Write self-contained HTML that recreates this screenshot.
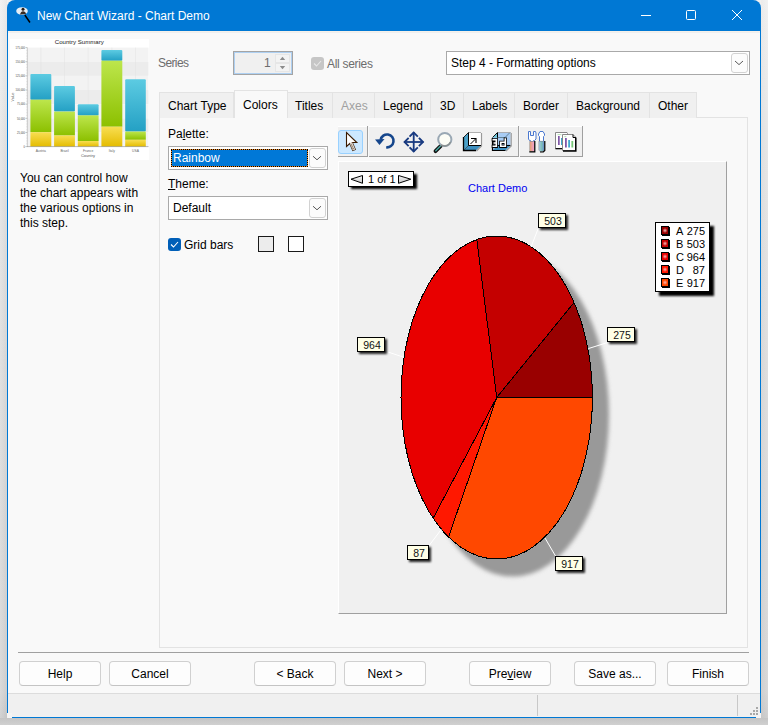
<!DOCTYPE html>
<html><head><meta charset="utf-8">
<style>
*{box-sizing:border-box;margin:0;padding:0}
html,body{width:768px;height:725px;overflow:hidden;background:linear-gradient(to bottom,#f0f0f0 0px,#e4e4e4 150px,#dcdcdc 360px,#d4d4d4 690px,#c8c8c8 725px)}
body{position:relative;font-family:"Liberation Sans",sans-serif;font-size:12px;color:#000}
.a{position:absolute}
#shadowL{left:0;top:0;width:7px;height:725px;background:linear-gradient(to right,rgba(255,255,255,.15),rgba(0,0,0,.03))}
#shadowR{left:761px;top:0;width:7px;height:725px;background:linear-gradient(to right,rgba(0,0,0,.02),rgba(255,255,255,.1))}
#shadowB{left:0;top:718px;width:768px;height:7px;background:linear-gradient(to bottom,#c4c4c4,#d0d0d0)}
#win{left:7px;top:0;width:754px;height:718px;background:#0078d4;border-radius:8px 8px 0 0}
#client{left:8px;top:31px;width:752px;height:686px;background:#f9f9f9}
.title{left:37px;top:9px;color:#fff;font-size:12px;line-height:14px;white-space:nowrap}
.t{position:absolute;white-space:nowrap;line-height:14px}
.btn{position:absolute;height:25px;border:1px solid #d0d0d0;border-bottom-color:#c4c4c4;border-radius:4px;background:#fdfdfd;text-align:center;line-height:24px;font-size:12px}
.tab{position:absolute;top:92px;height:26px;background:#f0f0f0;border:1px solid #e3e3e3;border-bottom:none}
.tab span{position:absolute;top:6px;white-space:nowrap;line-height:14px}
.combo{position:absolute;background:#fff;border:1px solid #a9a9a9}
.ddb{position:absolute;border:1px solid #d2d2d2;border-radius:3px;background:#fcfcfc}
</style></head><body>
<div class="a" id="shadowL"></div>
<div class="a" id="shadowR"></div>
<div class="a" id="shadowB"></div>
<div class="a" id="win"></div>
<div class="a" id="client"></div>
<div class="a title">New Chart Wizard - Chart Demo</div>

<!-- title bar buttons -->
<svg class="a" style="left:630px;top:0;width:130px;height:31px" width="130" height="31">
<line x1="11" y1="15.5" x2="21" y2="15.5" stroke="#fff" stroke-width="1"/>
<rect x="56.5" y="10.5" width="9" height="9" fill="none" stroke="#fff" stroke-width="1" rx="1"/>
<line x1="102" y1="10" x2="112" y2="20" stroke="#fff" stroke-width="1"/>
<line x1="112" y1="10" x2="102" y2="20" stroke="#fff" stroke-width="1"/>
</svg>
<!-- app icon -->
<svg class="a" style="left:10px;top:2px;width:26px;height:26px" width="26" height="26" viewBox="10 2 26 26">
<ellipse cx="22" cy="11" rx="5.8" ry="3.8" fill="#e6eef5"/>
<circle cx="23" cy="9.2" r="1.5" fill="#2a1a10"/>
<path d="M20 14.5 Q21 11.2 23 11.2 Q25.5 11.2 26 14 Z" fill="#3a2a20"/>
<line x1="24.8" y1="15" x2="30" y2="22.5" stroke="#000" stroke-width="1.4"/>
</svg>
<!-- thumbnail -->
<svg class="a" style="left:8px;top:31px;width:145px;height:132px" width="145" height="132" viewBox="8 31 145 132">
<defs>
<linearGradient id="gc" x1="0" y1="0" x2="0" y2="1"><stop offset="0" stop-color="#5ccbe2"/><stop offset="1" stop-color="#24a0c4"/></linearGradient>
<linearGradient id="gg" x1="0" y1="0" x2="0" y2="1"><stop offset="0" stop-color="#bde64c"/><stop offset="1" stop-color="#8cc000"/></linearGradient>
<linearGradient id="gy" x1="0" y1="0" x2="0" y2="1"><stop offset="0" stop-color="#f8de52"/><stop offset="1" stop-color="#e4bc00"/></linearGradient>
</defs>
<rect x="8" y="31" width="145" height="132" fill="#f9f9f9"/>
<rect x="10" y="39" width="139" height="121" fill="#fff"/>
<rect x="27.5" y="47.60" width="121" height="14.14" fill="#f3f3f3"/>
<rect x="27.5" y="61.74" width="121" height="14.14" fill="#ececec"/>
<rect x="27.5" y="75.89" width="121" height="14.14" fill="#f3f3f3"/>
<rect x="27.5" y="90.03" width="121" height="14.14" fill="#ececec"/>
<rect x="27.5" y="104.17" width="121" height="14.14" fill="#f3f3f3"/>
<rect x="27.5" y="118.31" width="121" height="14.14" fill="#ececec"/>
<rect x="27.5" y="132.46" width="121" height="14.14" fill="#f3f3f3"/>
<line x1="40.8" y1="47.6" x2="40.8" y2="146.6" stroke="#e2e2e2" stroke-width="0.5"/>
<line x1="64.5" y1="47.6" x2="64.5" y2="146.6" stroke="#e2e2e2" stroke-width="0.5"/>
<line x1="88.2" y1="47.6" x2="88.2" y2="146.6" stroke="#e2e2e2" stroke-width="0.5"/>
<line x1="111.8" y1="47.6" x2="111.8" y2="146.6" stroke="#e2e2e2" stroke-width="0.5"/>
<line x1="135.5" y1="47.6" x2="135.5" y2="146.6" stroke="#e2e2e2" stroke-width="0.5"/>
<rect x="30.4" y="74" width="20.9" height="25.7" rx="1" fill="url(#gc)"/>
<rect x="30.4" y="99.7" width="20.9" height="32.5" fill="url(#gg)"/>
<rect x="30.4" y="132.2" width="20.9" height="14.4" fill="url(#gy)"/>
<rect x="54.1" y="86" width="20.8" height="25.6" rx="1" fill="url(#gc)"/>
<rect x="54.1" y="111.6" width="20.8" height="23.9" fill="url(#gg)"/>
<rect x="54.1" y="135.5" width="20.8" height="11.1" fill="url(#gy)"/>
<rect x="77.8" y="104.2" width="20.8" height="11.2" rx="1" fill="url(#gc)"/>
<rect x="77.8" y="115.4" width="20.8" height="25.6" fill="url(#gg)"/>
<rect x="77.8" y="141" width="20.8" height="5.6" fill="url(#gy)"/>
<rect x="101.4" y="50.1" width="20.9" height="10.6" rx="1" fill="url(#gc)"/>
<rect x="101.4" y="60.7" width="20.9" height="66.0" fill="url(#gg)"/>
<rect x="101.4" y="126.7" width="20.9" height="19.9" fill="url(#gy)"/>
<rect x="125.2" y="79.2" width="20.6" height="52.4" rx="1" fill="url(#gc)"/>
<rect x="125.2" y="131.6" width="20.6" height="8.2" fill="url(#gg)"/>
<rect x="125.2" y="139.8" width="20.6" height="6.8" fill="url(#gy)"/>
<line x1="27.3" y1="47.6" x2="27.3" y2="146.6" stroke="#999" stroke-width="0.5"/>
<line x1="27" y1="146.6" x2="148.5" y2="146.6" stroke="#888" stroke-width="0.6"/>
<line x1="25.5" y1="47.60" x2="27.3" y2="47.60" stroke="#888" stroke-width="0.5"/>
<line x1="26.3" y1="50.43" x2="27.3" y2="50.43" stroke="#bbb" stroke-width="0.35"/>
<line x1="26.3" y1="53.26" x2="27.3" y2="53.26" stroke="#bbb" stroke-width="0.35"/>
<line x1="26.3" y1="56.09" x2="27.3" y2="56.09" stroke="#bbb" stroke-width="0.35"/>
<line x1="26.3" y1="58.91" x2="27.3" y2="58.91" stroke="#bbb" stroke-width="0.35"/>
<line x1="25.5" y1="61.74" x2="27.3" y2="61.74" stroke="#888" stroke-width="0.5"/>
<line x1="26.3" y1="64.57" x2="27.3" y2="64.57" stroke="#bbb" stroke-width="0.35"/>
<line x1="26.3" y1="67.40" x2="27.3" y2="67.40" stroke="#bbb" stroke-width="0.35"/>
<line x1="26.3" y1="70.23" x2="27.3" y2="70.23" stroke="#bbb" stroke-width="0.35"/>
<line x1="26.3" y1="73.06" x2="27.3" y2="73.06" stroke="#bbb" stroke-width="0.35"/>
<line x1="25.5" y1="75.89" x2="27.3" y2="75.89" stroke="#888" stroke-width="0.5"/>
<line x1="26.3" y1="78.71" x2="27.3" y2="78.71" stroke="#bbb" stroke-width="0.35"/>
<line x1="26.3" y1="81.54" x2="27.3" y2="81.54" stroke="#bbb" stroke-width="0.35"/>
<line x1="26.3" y1="84.37" x2="27.3" y2="84.37" stroke="#bbb" stroke-width="0.35"/>
<line x1="26.3" y1="87.20" x2="27.3" y2="87.20" stroke="#bbb" stroke-width="0.35"/>
<line x1="25.5" y1="90.03" x2="27.3" y2="90.03" stroke="#888" stroke-width="0.5"/>
<line x1="26.3" y1="92.86" x2="27.3" y2="92.86" stroke="#bbb" stroke-width="0.35"/>
<line x1="26.3" y1="95.69" x2="27.3" y2="95.69" stroke="#bbb" stroke-width="0.35"/>
<line x1="26.3" y1="98.51" x2="27.3" y2="98.51" stroke="#bbb" stroke-width="0.35"/>
<line x1="26.3" y1="101.34" x2="27.3" y2="101.34" stroke="#bbb" stroke-width="0.35"/>
<line x1="25.5" y1="104.17" x2="27.3" y2="104.17" stroke="#888" stroke-width="0.5"/>
<line x1="26.3" y1="107.00" x2="27.3" y2="107.00" stroke="#bbb" stroke-width="0.35"/>
<line x1="26.3" y1="109.83" x2="27.3" y2="109.83" stroke="#bbb" stroke-width="0.35"/>
<line x1="26.3" y1="112.66" x2="27.3" y2="112.66" stroke="#bbb" stroke-width="0.35"/>
<line x1="26.3" y1="115.49" x2="27.3" y2="115.49" stroke="#bbb" stroke-width="0.35"/>
<line x1="25.5" y1="118.31" x2="27.3" y2="118.31" stroke="#888" stroke-width="0.5"/>
<line x1="26.3" y1="121.14" x2="27.3" y2="121.14" stroke="#bbb" stroke-width="0.35"/>
<line x1="26.3" y1="123.97" x2="27.3" y2="123.97" stroke="#bbb" stroke-width="0.35"/>
<line x1="26.3" y1="126.80" x2="27.3" y2="126.80" stroke="#bbb" stroke-width="0.35"/>
<line x1="26.3" y1="129.63" x2="27.3" y2="129.63" stroke="#bbb" stroke-width="0.35"/>
<line x1="25.5" y1="132.46" x2="27.3" y2="132.46" stroke="#888" stroke-width="0.5"/>
<line x1="26.3" y1="135.29" x2="27.3" y2="135.29" stroke="#bbb" stroke-width="0.35"/>
<line x1="26.3" y1="138.11" x2="27.3" y2="138.11" stroke="#bbb" stroke-width="0.35"/>
<line x1="26.3" y1="140.94" x2="27.3" y2="140.94" stroke="#bbb" stroke-width="0.35"/>
<line x1="26.3" y1="143.77" x2="27.3" y2="143.77" stroke="#bbb" stroke-width="0.35"/>
<line x1="25.5" y1="146.60" x2="27.3" y2="146.60" stroke="#888" stroke-width="0.5"/>
<text x="25" y="48.90" font-size="2.6" text-anchor="end" fill="#444" font-family="Liberation Sans">175,000</text>
<text x="25" y="63.04" font-size="2.6" text-anchor="end" fill="#444" font-family="Liberation Sans">150,000</text>
<text x="25" y="77.19" font-size="2.6" text-anchor="end" fill="#444" font-family="Liberation Sans">125,000</text>
<text x="25" y="91.33" font-size="2.6" text-anchor="end" fill="#444" font-family="Liberation Sans">100,000</text>
<text x="25" y="105.47" font-size="2.6" text-anchor="end" fill="#444" font-family="Liberation Sans">75,000</text>
<text x="25" y="119.61" font-size="2.6" text-anchor="end" fill="#444" font-family="Liberation Sans">50,000</text>
<text x="25" y="133.76" font-size="2.6" text-anchor="end" fill="#444" font-family="Liberation Sans">25,000</text>
<text x="25" y="147.90" font-size="2.6" text-anchor="end" fill="#444" font-family="Liberation Sans">0</text>
<text x="40.8" y="152.3" font-size="3.3" text-anchor="middle" fill="#666" font-family="Liberation Sans">Austria</text>
<text x="64.5" y="152.3" font-size="3.3" text-anchor="middle" fill="#666" font-family="Liberation Sans">Brazil</text>
<text x="88.2" y="152.3" font-size="3.3" text-anchor="middle" fill="#666" font-family="Liberation Sans">France</text>
<text x="111.8" y="152.3" font-size="3.3" text-anchor="middle" fill="#666" font-family="Liberation Sans">Italy</text>
<text x="135.5" y="152.3" font-size="3.3" text-anchor="middle" fill="#666" font-family="Liberation Sans">USA</text>
<text x="88" y="156.8" font-size="4" text-anchor="middle" fill="#555" font-family="Liberation Sans">Country</text>
<text x="14" y="97" font-size="3.6" text-anchor="middle" fill="#555" font-family="Liberation Sans" transform="rotate(-90 14 97)">Value</text>
<text x="79.3" y="43.9" font-size="6.1" text-anchor="middle" fill="#222" font-family="Liberation Sans">Country Summary</text>
</svg>
<div class="a" style="left:8px;top:31px;width:752px;height:1px;background:#f6f1ea"></div>
<div class="a" style="left:8px;top:32px;width:752px;height:1px;background:#efefef"></div>
<!-- left description -->
<div class="t" style="left:20px;top:171px;line-height:15px;color:#000">You can control how<br>the chart appears with<br>the various options in<br>this step.</div>

<!-- series row -->
<div class="t" style="left:158px;top:56px;color:#6d6d6d;letter-spacing:-0.6px">Series</div>
<div class="a" style="left:233px;top:51px;width:60px;height:24px;background:#f0f0f0;border:1px solid #a4a4a4;box-shadow:inset 0 0 0 1px #aed0f2"></div>
<div class="t" style="left:264px;top:56px;color:#6d6d6d">1</div>
<svg class="a" style="left:274px;top:53px;width:17px;height:20px" width="17" height="20" viewBox="274 53 17 20">
<rect x="275.5" y="54.5" width="14" height="8" fill="#f3f3f3" stroke="#e6e6e6"/>
<rect x="275.5" y="63.5" width="14" height="8" fill="#f3f3f3" stroke="#e6e6e6"/>
<path d="M279.8 60 L282.5 56.8 L285.2 60 Z" fill="#8c8c8c"/>
<path d="M279.8 66 L282.5 69.2 L285.2 66 Z" fill="#8c8c8c"/>
</svg>
<div class="a" style="left:311px;top:57px;width:13px;height:13px;border-radius:3px;background:#c6c6c6"></div>
<svg class="a" style="left:311px;top:57px;width:13px;height:13px" width="13" height="13"><path d="M3 6.5 L5.5 9 L10 4" fill="none" stroke="#e8e8e8" stroke-width="1.1"/></svg>
<div class="t" style="left:327px;top:57px;color:#6d6d6d;letter-spacing:-0.3px">All series</div>
<div class="combo" style="left:446px;top:51px;width:304px;height:24px"></div>
<div class="t" style="left:451px;top:56px">Step 4 - Formatting options</div>
<div class="ddb" style="left:731px;top:53px;width:17px;height:20px"></div>
<svg class="a" style="left:731px;top:53px;width:17px;height:20px" width="17" height="20"><path d="M4 8 L8 11.6 L12 8" fill="none" stroke="#505050" stroke-width="0.95"/></svg>

<!-- tab panel -->
<div class="a" style="left:159px;top:117px;width:589px;height:531px;border:1px solid #e3e3e3;background:#f9f9f9"></div>
<div class="tab" style="left:159px;width:75px"><span style="left:8px;color:#000">Chart Type</span></div>
<div class="tab" style="left:287px;width:46px"><span style="left:7px;color:#000">Titles</span></div>
<div class="tab" style="left:332px;width:43px"><span style="left:8px;color:#a0a0a0">Axes</span></div>
<div class="tab" style="left:374px;width:57px"><span style="left:8px;color:#000">Legend</span></div>
<div class="tab" style="left:430px;width:34px"><span style="left:9px;color:#000">3D</span></div>
<div class="tab" style="left:463px;width:52px"><span style="left:8px;color:#000">Labels</span></div>
<div class="tab" style="left:514px;width:54px"><span style="left:8px;color:#000">Border</span></div>
<div class="tab" style="left:567px;width:83px"><span style="left:8px;color:#000">Background</span></div>
<div class="tab" style="left:649px;width:48px"><span style="left:8px;color:#000">Other</span></div>
<div class="tab" style="left:234px;top:90px;width:54px;height:28px;background:#f9f9f9;border-color:#e3e3e3"><span style="left:8px;top:7px">Colors</span></div>

<!-- palette / theme -->
<div class="t" style="left:168px;top:127px">Pa<u>l</u>ette:</div>
<div class="combo" style="left:168px;top:146px;width:160px;height:24px"></div>
<div class="a" style="left:171px;top:149px;width:137px;height:18px;background:#f08a24;border:1px dotted #000"></div><div class="a" style="left:172px;top:150px;width:135px;height:16px;background:#0078d7"></div>
<div class="t" style="left:173px;top:151px;color:#fff">Rainbow</div>
<div class="ddb" style="left:309px;top:148px;width:17px;height:20px"></div>
<svg class="a" style="left:309px;top:148px;width:17px;height:20px" width="17" height="20"><path d="M4 8.2 L8 11.8 L12 8.2" fill="none" stroke="#505050" stroke-width="0.95"/></svg>
<div class="t" style="left:168px;top:177px"><u>T</u>heme:</div>
<div class="combo" style="left:168px;top:196px;width:160px;height:24px"></div>
<div class="t" style="left:173px;top:201px">Default</div>
<div class="ddb" style="left:309px;top:198px;width:17px;height:20px"></div>
<svg class="a" style="left:309px;top:198px;width:17px;height:20px" width="17" height="20"><path d="M4 8.2 L8 11.8 L12 8.2" fill="none" stroke="#505050" stroke-width="0.95"/></svg>
<div class="a" style="left:168px;top:238px;width:13px;height:13px;border-radius:3px;background:#005fb8"></div>
<svg class="a" style="left:168px;top:238px;width:13px;height:13px" width="13" height="13"><path d="M3 6.5 L5.5 9 L10 4" fill="none" stroke="#fff" stroke-width="1.1"/></svg>
<div class="t" style="left:184px;top:238px">Grid bars</div>
<div class="a" style="left:258px;top:236px;width:16px;height:16px;border:1px solid #1a1a1a;background:#ececec"></div>
<div class="a" style="left:288px;top:236px;width:16px;height:16px;border:1px solid #1a1a1a;background:#fff"></div>

<!-- toolbar -->
<svg class="a" style="left:330px;top:120px;width:260px;height:40px" width="260" height="40" viewBox="330 120 260 40">
<!-- segments -->
<rect x="338" y="126" width="30" height="31" fill="#f0f0f0"/>
<line x1="338" y1="126.5" x2="367" y2="126.5" stroke="#fff"/>
<line x1="367.5" y1="126" x2="367.5" y2="157" stroke="#a0a0a0"/>
<line x1="338" y1="156.5" x2="368" y2="156.5" stroke="#a0a0a0"/>
<rect x="369" y="126" width="150" height="31" fill="#f0f0f0"/>
<line x1="369" y1="126.5" x2="518" y2="126.5" stroke="#fff"/>
<line x1="518.5" y1="126" x2="518.5" y2="157" stroke="#a0a0a0"/>
<line x1="369" y1="156.5" x2="519" y2="156.5" stroke="#a0a0a0"/>
<rect x="520" y="126" width="63" height="31" fill="#f0f0f0"/>
<line x1="520" y1="126.5" x2="582" y2="126.5" stroke="#fff"/>
<line x1="582.5" y1="126" x2="582.5" y2="157" stroke="#a0a0a0"/>
<line x1="520" y1="156.5" x2="583" y2="156.5" stroke="#a0a0a0"/>
<!-- selected button -->
<rect x="338.5" y="130.5" width="24" height="23" rx="2.5" fill="#cce8ff" stroke="#99d1ff"/>
<!-- arrow cursor -->
<path d="M346.5 132.5 L346.5 146.5 L349.8 143.5 L352.8 150.5 L355.3 149.5 L352.3 142.5 L356.8 142.5 Z" fill="#fff" stroke="#3a1a00" stroke-width="1.1" stroke-linejoin="miter"/>
<path d="M349.8 143.5 L352.8 150.5 L355.3 149.5 L352.3 142.5 Z" fill="#d8d0c8"/>
<path d="M351.3 144.5 L353.6 149.6" stroke="#3a1a00" stroke-width="0.8" stroke-dasharray="1 1"/>
<!-- rotate -->
<path d="M380.7 139.8 A6.45 6.45 0 1 1 386.2 147.3" fill="none" stroke="#15468c" stroke-width="2.6"/>
<path d="M375 139.5 L384.5 139 L379.5 145 Z" fill="#15468c"/>
<!-- move -->
<g stroke="#183a80" stroke-width="1.8" fill="none" stroke-linecap="square">
<line x1="405" y1="142" x2="422.5" y2="142"/><line x1="413.7" y1="133" x2="413.7" y2="151"/>
<path d="M408 138.5 L404.5 142 L408 145.5"/><path d="M419.5 138.5 L423 142 L419.5 145.5"/>
<path d="M410.2 136 L413.7 132.5 L417.2 136"/><path d="M410.2 148 L413.7 151.5 L417.2 148"/>
</g>
<!-- zoom -->
<line x1="435.5" y1="151.2" x2="440.8" y2="145.8" stroke="#111" stroke-width="3.8" stroke-linecap="round"/>
<line x1="435.8" y1="150.8" x2="440.5" y2="146.1" stroke="#48a8a0" stroke-width="1.4" stroke-linecap="round"/>
<circle cx="444.8" cy="139.5" r="6.6" fill="#fdfdf6" stroke="#9aa8b4" stroke-width="2"/>
<path d="M450.5 142 A6.6 6.6 0 0 1 441 145" fill="none" stroke="#8a9090" stroke-width="1.6"/>
<!-- box arrow -->
<path d="M463.5 137.5 L468.5 132.5 L468.5 145.5 L463.5 150.5 Z" fill="#4aa0c8"/>
<path d="M463.5 150.5 L468.5 145.5 L481 145.5 L476 150.5 Z" fill="#3e90c0"/>
<rect x="468.5" y="132.5" width="12.5" height="13" fill="#fff"/>
<path d="M468.5 132.5 L481 132.5" stroke="#b0b0b0" stroke-width="1"/>
<path d="M481.5 133 L481.5 146 L476.5 151" fill="none" stroke="#999" stroke-width="1.2"/>
<path d="M463.5 137.5 L468.5 132.5" stroke="#222" stroke-width="1"/>
<path d="M463.5 137 L463.5 150.5 L476 150.5" fill="none" stroke="#000" stroke-width="1.3"/>
<path d="M468.5 132.5 L468.5 145.5 L481 145.5" fill="none" stroke="#000" stroke-width="1"/>
<path d="M468.5 145.5 L463.5 150.5" stroke="#000" stroke-width="0.8" stroke-dasharray="1 0.5"/>
<path d="M470.5 144 L475.5 139" stroke="#000" stroke-width="1"/>
<path d="M471 138.5 L476 138.5 L476 143" fill="none" stroke="#000" stroke-width="1.1"/>
<!-- 3d box -->
<path d="M492.5 137.5 L497.5 132.5 L510.5 132.5 L510.5 145.5 L505.5 150.5 L492.5 150.5 Z" fill="#a8ccf4"/>
<path d="M492.5 137.5 L497.5 132.5 L497.5 137.5 Z" fill="#70c8d8"/>
<path d="M492.5 150.5 L497.5 145.5 L510.5 145.5 L505.5 150.5 Z" fill="#3e90c0"/>
<path d="M492.5 138 L492.5 150.5 L505.5 150.5" fill="none" stroke="#000" stroke-width="1.2"/>
<path d="M492.5 137.5 L497.5 132.5" stroke="#111" stroke-width="1"/>
<path d="M497.5 132.5 L497.5 138.5" stroke="#000" stroke-width="1"/>
<path d="M497.5 137.5 L505 137.5 L510 132.5" fill="none" stroke="#507080" stroke-width="0.8"/>
<path d="M497 145.5 L510.5 145.5" stroke="#000" stroke-width="1.1"/>
<path d="M498 132.5 L510.5 132.5" stroke="#a0a0a0" stroke-width="0.8"/>
<path d="M511.2 133 L511.2 146 L506 151.2" fill="none" stroke="#999" stroke-width="1.2"/>
<g fill="none" stroke-linecap="square" stroke-linejoin="miter">
<path d="M493.3 139.8 L496.3 139.8 L496.3 146.3 L493.3 146.3 M494.3 143 L496.3 143" stroke="#000" stroke-width="3.2"/>
<path d="M500.8 142.3 L505.3 142.3 M505.3 139 L505.3 146.3 L500.8 146.3 L500.8 142.3" stroke="#000" stroke-width="3.2"/>
<path d="M493.3 139.8 L496.3 139.8 L496.3 146.3 L493.3 146.3 M494.3 143 L496.3 143" stroke="#fff" stroke-width="1.6"/>
<path d="M500.8 142.3 L505.3 142.3 M505.3 139 L505.3 146.3 L500.8 146.3 L500.8 142.3" stroke="#fff" stroke-width="1.6"/>
</g>
<!-- tools -->
<defs>
<linearGradient id="wh" x1="0" y1="0" x2="1" y2="0"><stop offset="0" stop-color="#e8a070"/><stop offset="1" stop-color="#f0a0d8"/></linearGradient>
<linearGradient id="sh" x1="0" y1="0" x2="1" y2="0"><stop offset="0" stop-color="#a8c8f0"/><stop offset=".5" stop-color="#80c0b8"/><stop offset="1" stop-color="#6890d8"/></linearGradient>
</defs>
<path d="M528.5 131.5 L530.5 131.5 L530.5 135.5 L533.5 135.5 L533.5 131.5 L535.5 131.5 L536 133 L536 139 L534.5 140.5 L533.5 140.5 L533.5 141.5 L530.5 141.5 L530.5 140.5 L529.5 140.5 L528.5 139 Z" fill="#fff" stroke="#4a78d0" stroke-width="1"/>
<rect x="529.8" y="141.3" width="4.6" height="10" fill="url(#wh)" stroke="#888" stroke-width="0.5"/>
<path d="M534.8 141 L534.8 151.8 L529.3 151.8" fill="none" stroke="#000" stroke-width="1.2"/>
<path d="M538.5 135.5 L538.5 134 L540 131.5 L543 131.5 L544.5 134 L544.5 135.5 L543.5 136.5 L543.5 141.5 L539.5 141.5 L539.5 136.5 Z" fill="#fff" stroke="#4a78d0" stroke-width="1"/>
<path d="M538.8 141.3 L544.3 141.3 L544.3 150 L543 151.5 L540 151.5 L538.8 150 Z" fill="url(#sh)" stroke="#888" stroke-width="0.5"/>
<path d="M544.8 141 L544.8 150.5 L543.3 152 L540 152" fill="none" stroke="#000" stroke-width="1.2"/>
<!-- pages -->
<path d="M555.5 132.5 L567 132.5 L567.5 133.5 L567.5 148.5 L555.5 148.5 Z" fill="#fff" stroke="#7a7a7a" stroke-width="0.9"/>
<path d="M555.5 148.7 L562.5 148.7" stroke="#000" stroke-width="1.2"/>
<rect x="557.5" y="134.3" width="4" height="0.8" fill="#a0d8a0"/>
<rect x="558" y="136" width="1.7" height="9" fill="#8058a8"/>
<rect x="561" y="138" width="1.7" height="7" fill="#40a8d0"/>
<path d="M562.5 134.5 L573 134.5 L575.5 137 L575.5 150.5 L562.5 150.5 Z" fill="#fff" stroke="#7a7a7a" stroke-width="0.9"/>
<path d="M573 134.5 L573 137.5 L575.8 137.5" fill="none" stroke="#000" stroke-width="1"/>
<path d="M575.8 137.5 L575.8 151 L563 151" fill="none" stroke="#000" stroke-width="1.5"/>
<rect x="564.3" y="136.3" width="2" height="0.8" fill="#a0d8a0"/>
<rect x="565" y="138" width="1.8" height="9.5" fill="#8058a8"/>
<rect x="568.2" y="140" width="1.8" height="7.5" fill="#40a8d0"/>
<rect x="571.4" y="141" width="1.8" height="6.5" fill="#78c878"/>
</svg>

<!-- chart area -->
<div class="a" style="left:338px;top:161px;width:389px;height:453px;background:#f0f0f0;border-right:1px solid #a0a0a0;border-bottom:1px solid #a0a0a0;border-top:1px solid #fff;border-left:1px solid #fff"></div>
<svg class="a" style="left:339px;top:162px;width:387px;height:451px" width="387" height="451" viewBox="339 162 387 451">
<defs><filter id="blur" x="-20%" y="-20%" width="140%" height="140%"><feGaussianBlur stdDeviation="2.3"/></filter>
<filter id="bl2" x="-50%" y="-50%" width="200%" height="200%"><feGaussianBlur stdDeviation="1.2"/></filter></defs>
<ellipse cx="512.5" cy="414.5" rx="96.5" ry="162" fill="#999" filter="url(#blur)"/>
<g shape-rendering="crispEdges">
<path d="M496.7,397.5 L592.40,397.50 A95.7,161.5 0 0 0 574.07,302.45 Z" fill="#990000"/>
<path d="M496.7,397.5 L574.07,302.45 A95.7,161.5 0 0 0 476.81,239.53 Z" fill="#C40000"/>
<path d="M496.7,397.5 L476.81,239.53 A95.7,161.5 0 0 0 433.13,518.22 Z" fill="#E80000"/>
<path d="M496.7,397.5 L433.13,518.22 A95.7,161.5 0 0 0 448.53,537.05 Z" fill="#FF1800"/>
<path d="M496.7,397.5 L448.53,537.05 A95.7,161.5 0 0 0 592.40,397.50 Z" fill="#FF4800"/>
<g stroke="#000" stroke-width="1" fill="none">
<ellipse cx="496.7" cy="397.5" rx="95.7" ry="161.5"/>
<line x1="496.7" y1="397.5" x2="592.40" y2="397.50"/>
<line x1="496.7" y1="397.5" x2="574.07" y2="302.45"/>
<line x1="496.7" y1="397.5" x2="476.81" y2="239.53"/>
<line x1="496.7" y1="397.5" x2="433.13" y2="518.22"/>
<line x1="496.7" y1="397.5" x2="448.53" y2="537.05"/>
</g></g>
<!-- leaders -->
<g stroke="#fff" stroke-width="1">
<line x1="538" y1="229" x2="531" y2="247"/>
<line x1="588.3" y1="348.6" x2="607" y2="342.7"/>
<line x1="388" y1="352" x2="403" y2="357"/>
<line x1="429.5" y1="545" x2="441.3" y2="529.4"/>
<line x1="555.5" y1="556" x2="545" y2="538"/>
</g>
</svg>
<div class="a" style="left:540px;top:215px;width:28px;height:15px;background:#000;opacity:.85;filter:blur(1px)"></div><div class="a" style="left:538px;top:213px;width:28px;height:15px;background:#ffffe6;border:1px solid #000;font-size:10.5px;line-height:13px;text-align:center;padding-left:2px;padding-top:1px;color:#111">503</div>
<div class="a" style="left:609px;top:329px;width:28px;height:15px;background:#000;opacity:.85;filter:blur(1px)"></div><div class="a" style="left:607px;top:327px;width:28px;height:15px;background:#ffffe6;border:1px solid #000;font-size:10.5px;line-height:13px;text-align:center;padding-left:2px;padding-top:1px;color:#111">275</div>
<div class="a" style="left:359px;top:339px;width:28px;height:15px;background:#000;opacity:.85;filter:blur(1px)"></div><div class="a" style="left:357px;top:337px;width:28px;height:15px;background:#ffffe6;border:1px solid #000;font-size:10.5px;line-height:13px;text-align:center;padding-left:2px;padding-top:1px;color:#111">964</div>
<div class="a" style="left:409px;top:547px;width:22px;height:15px;background:#000;opacity:.85;filter:blur(1px)"></div><div class="a" style="left:407px;top:545px;width:22px;height:15px;background:#ffffe6;border:1px solid #000;font-size:10.5px;line-height:13px;text-align:center;padding-left:2px;padding-top:1px;color:#111">87</div>
<div class="a" style="left:557px;top:558px;width:28px;height:15px;background:#000;opacity:.85;filter:blur(1px)"></div><div class="a" style="left:555px;top:556px;width:28px;height:15px;background:#ffffe6;border:1px solid #000;font-size:10.5px;line-height:13px;text-align:center;padding-left:2px;padding-top:1px;color:#111">917</div>
<div class="a" style="left:351px;top:174px;width:66px;height:15px;background:#000;filter:blur(1px)"></div>
<div class="a" style="left:348px;top:171px;width:66px;height:16px;background:#fff;border:1px solid #000"></div>
<svg class="a" style="left:348px;top:171px;width:66px;height:16px" width="66" height="16" viewBox="348 171 66 16">
<defs><linearGradient id="ag" x1="0" y1="0" x2="0" y2="1"><stop offset="0" stop-color="#f4f4f4"/><stop offset="1" stop-color="#c8c8c8"/></linearGradient></defs>
<path d="M351 179.2 L362.5 175.5 L362.5 183.3 Z" fill="url(#ag)" stroke="#000" stroke-width="1" stroke-linejoin="miter"/>
<path d="M410.8 179.2 L398.5 175.5 L398.5 183.3 Z" fill="url(#ag)" stroke="#000" stroke-width="1" stroke-linejoin="miter"/>
</svg>
<div class="t" style="left:368px;top:172px;font-size:11px;line-height:14px">1 of 1</div>
<div class="t" style="left:468px;top:182px;font-size:11px;line-height:12px;color:#0000f0">Chart Demo</div>
<!-- legend -->
<div class="a" style="left:659px;top:226px;width:55px;height:70px;background:#000;filter:blur(1.3px)"></div>
<div class="a" style="left:655px;top:222px;width:55px;height:70px;background:#fff;border:1px solid #000"></div>
<div class="a" style="left:662px;top:227px;width:8px;height:9px;background:#000;filter:blur(.6px)"></div><div class="a" style="left:661px;top:226px;width:8px;height:9px;background:radial-gradient(circle at 50% 50%,#f4b8b8 0,#990000 2.5px);border:1px solid #000"></div><div class="t" style="left:676px;top:225px;font-size:11px;line-height:13px">A</div><div class="t" style="left:684px;width:21px;text-align:right;top:225px;font-size:11px;line-height:13px">275</div>
<div class="a" style="left:662px;top:240px;width:8px;height:9px;background:#000;filter:blur(.6px)"></div><div class="a" style="left:661px;top:239px;width:8px;height:9px;background:radial-gradient(circle at 50% 50%,#f4b8b8 0,#C40000 2.5px);border:1px solid #000"></div><div class="t" style="left:676px;top:238px;font-size:11px;line-height:13px">B</div><div class="t" style="left:684px;width:21px;text-align:right;top:238px;font-size:11px;line-height:13px">503</div>
<div class="a" style="left:662px;top:253px;width:8px;height:9px;background:#000;filter:blur(.6px)"></div><div class="a" style="left:661px;top:252px;width:8px;height:9px;background:radial-gradient(circle at 50% 50%,#f4b8b8 0,#E80000 2.5px);border:1px solid #000"></div><div class="t" style="left:676px;top:251px;font-size:11px;line-height:13px">C</div><div class="t" style="left:684px;width:21px;text-align:right;top:251px;font-size:11px;line-height:13px">964</div>
<div class="a" style="left:662px;top:266px;width:8px;height:9px;background:#000;filter:blur(.6px)"></div><div class="a" style="left:661px;top:265px;width:8px;height:9px;background:radial-gradient(circle at 50% 50%,#f4b8b8 0,#FF1800 2.5px);border:1px solid #000"></div><div class="t" style="left:676px;top:264px;font-size:11px;line-height:13px">D</div><div class="t" style="left:684px;width:21px;text-align:right;top:264px;font-size:11px;line-height:13px">87</div>
<div class="a" style="left:662px;top:279px;width:8px;height:9px;background:#000;filter:blur(.6px)"></div><div class="a" style="left:661px;top:278px;width:8px;height:9px;background:radial-gradient(circle at 50% 50%,#f4b8b8 0,#FF4800 2.5px);border:1px solid #000"></div><div class="t" style="left:676px;top:277px;font-size:11px;line-height:13px">E</div><div class="t" style="left:684px;width:21px;text-align:right;top:277px;font-size:11px;line-height:13px">917</div>

<!-- bottom -->
<div class="a" style="left:18px;top:652px;width:731px;height:1px;background:#a0a0a0"></div>
<div class="btn" style="left:19px;top:661px;width:82px">Help</div>
<div class="btn" style="left:109px;top:661px;width:82px">Cancel</div>
<div class="btn" style="left:254px;top:661px;width:82px">&lt; Back</div>
<div class="btn" style="left:344px;top:661px;width:82px">Next &gt;</div>
<div class="btn" style="left:469px;top:661px;width:82px">Pre<u>v</u>iew</div>
<div class="btn" style="left:574px;top:661px;width:82px">Save as...</div>
<div class="btn" style="left:667px;top:661px;width:82px">Finish</div>
<!-- status bar -->
<div class="a" style="left:8px;top:693px;width:752px;height:24px;background:#f0f0f0;border-top:1px solid #dcdcdc"></div>
<div class="a" style="left:537px;top:695px;width:1px;height:21px;background:#c8c8c8"></div>
<div class="a" style="left:737px;top:695px;width:1px;height:21px;background:#c8c8c8"></div>
<div class="a" style="left:756px;top:713px;width:5px;height:5px;background:#f4f4f4"></div>
<div class="a" style="left:7px;top:713px;width:5px;height:5px;background:#f4f4f4"></div>
<svg class="a" style="left:749px;top:706px;width:12px;height:12px" width="12" height="12">
<rect x="7" y="1" width="2" height="2" fill="#a8a8a8"/><rect x="4" y="4" width="2" height="2" fill="#a8a8a8"/><rect x="7" y="4" width="2" height="2" fill="#a8a8a8"/>
<rect x="1" y="7" width="2" height="2" fill="#a8a8a8"/><rect x="4" y="7" width="2" height="2" fill="#a8a8a8"/><rect x="7" y="7" width="2" height="2" fill="#a8a8a8"/>
</svg>

</body></html>
